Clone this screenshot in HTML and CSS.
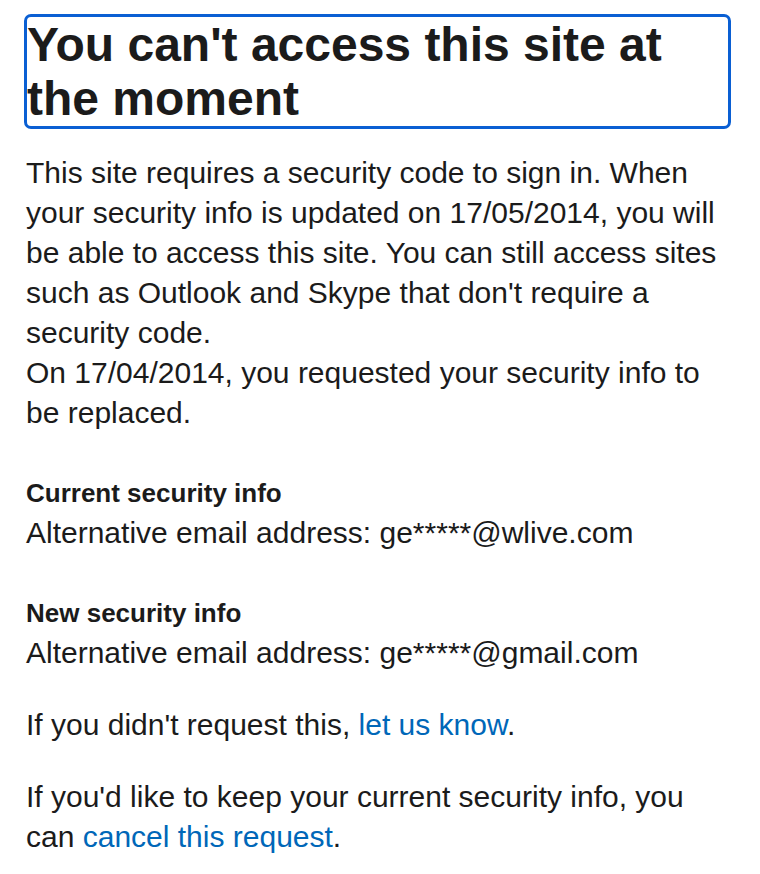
FILE: index.html
```html
<!DOCTYPE html>
<html lang="en">
<head>
<meta charset="utf-8">
<title>You can't access this site at the moment</title>
<link rel="stylesheet" href="styles.css">
</head>
<body>
<main class="page">
  <h1 class="title" tabindex="-1">You can't access this site at the moment</h1>
  <div class="intro">
    <div>This site requires a security code to sign in. When your security info is updated on 17/05/2014, you will be able to access this site. You can still access sites such as Outlook and Skype that don't require a security code.</div>
    <div>On 17/04/2014, you requested your security info to be replaced.</div>
  </div>
  <section class="info">
    <div class="info-label">Current security info</div>
    <div>Alternative email address: ge*****@wlive.com</div>
  </section>
  <section class="info">
    <div class="info-label">New security info</div>
    <div>Alternative email address: ge*****@gmail.com</div>
  </section>
  <p class="note">If you didn't request this, <a href="#" class="link">let us know</a>.</p>
  <p class="note">If you'd like to keep your current security info, you can <a href="#" class="link">cancel this request</a>.</p>
</main>
</body>
</html>
```
FILE: styles.css
```css
html, body {
  margin: 0;
  padding: 0;
  background: #ffffff;
}
body {
  font-family: "Liberation Sans", Arial, Helvetica, sans-serif;
  color: #1b1b1b;
}
.page {
  width: 702px;
  padding: 17px 0 0 26px;
  font-size: 30px;
  line-height: 40px;
}
.title {
  margin: 0 0 0 1px;
  font-family: "Liberation Sans", Arial, sans-serif;
  font-weight: 700;
  font-size: 48px;
  line-height: 54px;
  padding-top: 1px;
  outline: 3px solid #0a5fd3;
  border-radius: 4px;
  color: #1b1b1b;
}
.intro {
  margin-top: 27px;
}
.info {
  margin-top: 40px;
}
.info-label {
  font-weight: 700;
  font-size: 26px;
}
.note {
  margin: 32px 0 0 0;
}
.link {
  color: #0067b8;
  text-decoration: none;
}
```
